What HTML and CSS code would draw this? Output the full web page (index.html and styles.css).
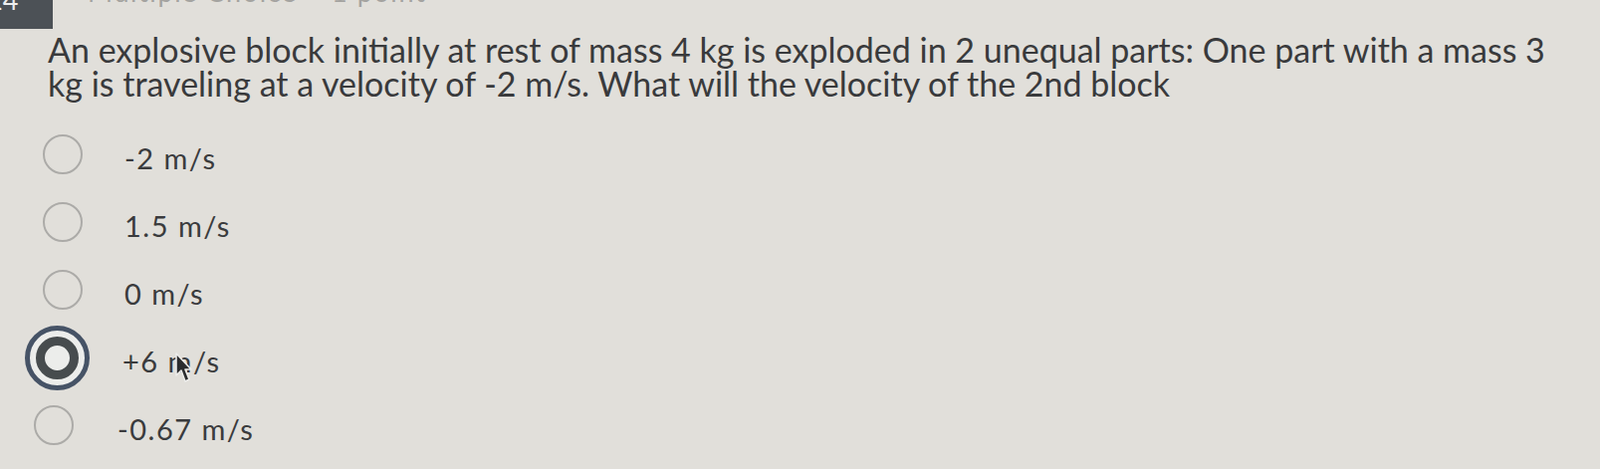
FILE: index.html
```html
<!DOCTYPE html>
<html lang="en">
<head>
<meta charset="utf-8">
<title>Multiple Choice</title>
<link rel="stylesheet" href="styles.css">
</head>
<body>
<div class="page">
  <div class="topbar">
    <div class="qnum"><span class="qnum-text">24</span></div>
    <div class="meta">Multiple Choice &nbsp;&nbsp; 1 point</div>
  </div>
  <p class="question">An explosive block initially at rest of mass 4 kg is exploded in 2 unequal parts: One part with a mass 3 kg is traveling at a velocity of -2 m/s. What will the velocity of the 2nd block</p>
  <ul class="options">
    <li class="option"><span class="radio"></span><span class="label">-2 m/s</span></li>
    <li class="option"><span class="radio"></span><span class="label">1.5 m/s</span></li>
    <li class="option"><span class="radio"></span><span class="label">0 m/s</span></li>
    <li class="option selected"><span class="radio"><span class="dot"></span></span><span class="label">+6 m/s<svg class="cursor" width="18" height="32" viewBox="0 0 18 32"><path d="M2 2 L2 24 L7 19 L11 30 L15 28 L11 18 L17 18 Z" fill="#2b2c2e" stroke="#ececea" stroke-width="1.6" stroke-linejoin="round"/></svg></span></li>
    <li class="option last"><span class="radio"></span><span class="label">-0.67 m/s</span></li>
  </ul>
</div>
</body>
</html>
```

FILE: styles.css
```css
html, body {
  margin: 0;
  padding: 0;
}
body {
  background: #e1dfda;
  font-family: Lato, "Open Sans", "Liberation Sans", sans-serif;
  color: #3a3b3d;
  width: 1607px;
  height: 471px;
  overflow: hidden;
}
.topbar {
  display: flex;
  align-items: flex-start;
  height: 29px;
}
.qnum {
  width: 53px;
  height: 29px;
  background: #4c5156;
  color: #eeeeee;
  font-size: 27px;
  line-height: 0;
  box-sizing: border-box;
  overflow: hidden;
  flex: none;
}
.qnum-text {
  display: block;
  margin-left: -13px;
}
.meta {
  margin-left: 35px;
  margin-top: -8px;
  font-size: 27px;
  line-height: 0;
  letter-spacing: 1.6px;
  color: #a4a3a0;
  white-space: pre;
}
.question {
  margin: 4px 0 0 48px;
  width: 1540px;
  font-size: 34px;
  line-height: 34px;
  letter-spacing: 0;
  color: #393a3c;
}
.options {
  list-style: none;
  margin: 34px 0 0 0;
  padding: 0 0 0 43px;
  display: flex;
  flex-direction: column;
  gap: 28px;
}
.option {
  display: flex;
  align-items: center;
  height: 40px;
}
.radio {
  width: 40px;
  height: 40px;
  border: 2.5px solid #acaba8;
  border-radius: 50%;
  flex: none;
  box-sizing: border-box;
  display: flex;
  align-items: center;
  justify-content: center;
}
.label {
  margin-left: 42px;
  margin-top: 7px;
  font-size: 29px;
  line-height: 30px;
  letter-spacing: 1.5px;
  color: #3a3b3d;
  position: relative;
}
.selected .radio {
  width: 65px;
  height: 65px;
  margin-left: -18px;
  border: 5px solid #465366;
  background: #ecedeb;
}
.selected .dot {
  width: 43px;
  height: 43px;
  border-radius: 50%;
  border: 9px solid #474c4e;
  background: #ecedeb;
  box-sizing: border-box;
}
.selected .label {
  margin-left: 33px;
}
.last {
  margin-left: -9px;
}
.last .label {
  margin-left: 44px;
}
.cursor {
  position: absolute;
  left: 52px;
  top: 5px;
}
```
